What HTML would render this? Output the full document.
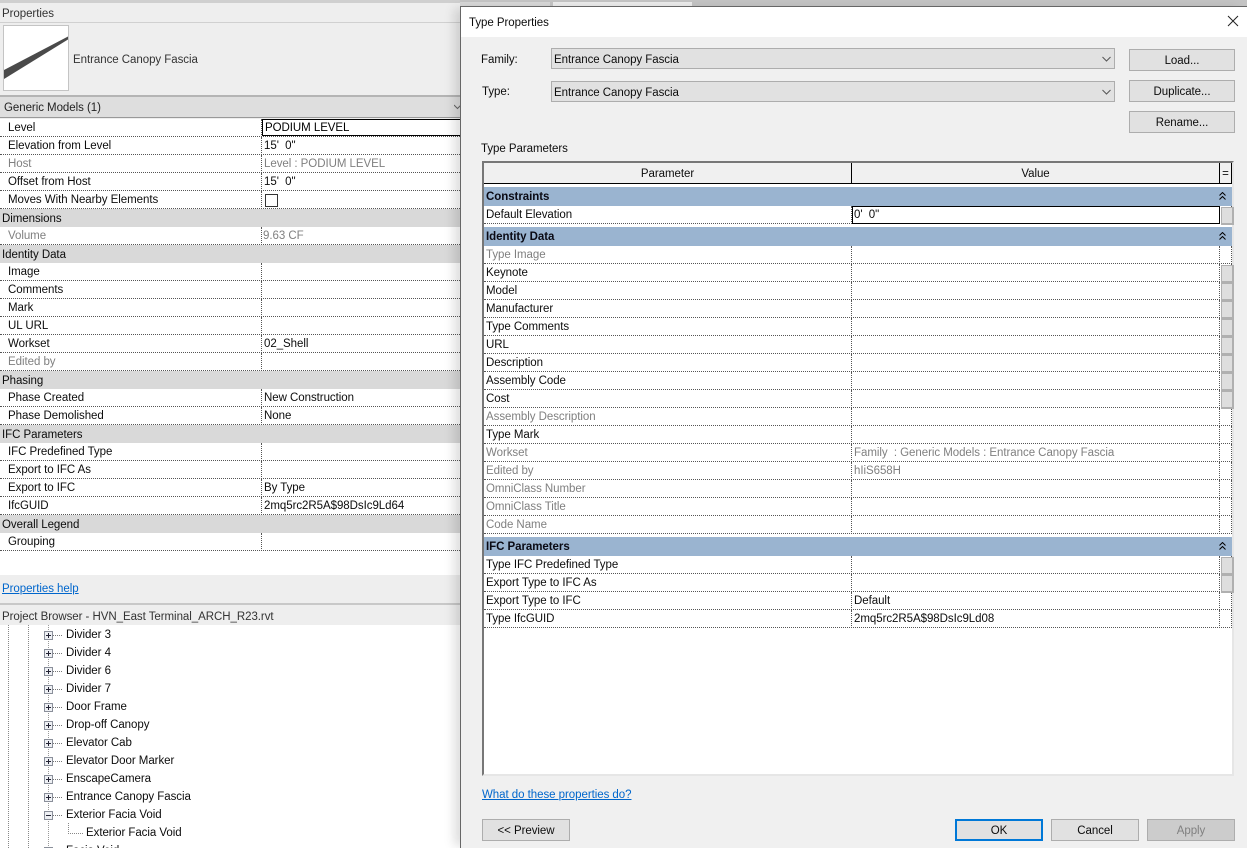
<!DOCTYPE html>
<html style="overflow:hidden"><head><meta charset="utf-8"><title>Type Properties</title>
<style>
html,body{margin:0;padding:0;width:1247px;height:848px;overflow:hidden}
body{font:11.5px/20px "Liberation Sans",sans-serif;letter-spacing:-.05px;color:#0c0c0c;background:#eee}
div,a,span{position:absolute;white-space:nowrap;box-sizing:border-box}
#w{left:0;top:0;width:1247px;height:848px;overflow:hidden;background:#eee}
.h{left:0;width:460px;height:18px;background:#d9d9d9;padding-left:2px}
.r{left:0;width:460px;height:18px;background:#fff;border-bottom:1px dotted #555;line-height:19px}
.r span{left:8px;top:0}.r span+span{left:264px}
.g{color:#808080}
.v{left:261px;top:0;width:0;height:18px;border-left:1px dotted #555}
.t{left:66px;line-height:20px}
.b{left:44px;width:9px;height:9px;border:1px solid #8a8f9a;background:linear-gradient(#223,#223) 1px 3px/5px 1px no-repeat,linear-gradient(#223,#223) 3px 1px/1px 5px no-repeat,#eef0f4}
.m{background:linear-gradient(#223,#223) 1px 3px/5px 1px no-repeat,#eef0f4}
.d{left:53px;width:9px;height:0;border-top:1px dotted #777}
.s{left:484px;width:748px;height:19px;background:#9ab4d0;font-weight:bold;padding-left:2px;line-height:21px;color:#0a0a14}
.s svg{position:absolute;left:735px;top:5px}
.p{left:484px;width:748px;height:18px;border-bottom:1px dotted #555;line-height:19px;background:#fff}
.p span{left:2px;top:0}.p span+span{left:370px}
.p:after{content:"";position:absolute;left:367px;top:0;height:18px;border-left:1px dotted #555}
.p:before{content:"";position:absolute;left:735px;top:0;height:18px;border-left:1px dotted #555;border-right:1px dotted #555;width:13px;box-sizing:border-box}
.x b{position:absolute;left:737px;top:1px;width:10px;height:15px;background:#dedede;border:1px solid #b0b0b0;border-width:1px 2px 2px 1px;z-index:2}
.btn{background:#e1e1e1;border:1px solid #adadad;text-align:center;line-height:22px;height:22px}
.cb{left:551px;width:564px;height:21px;background:#e1e1e1;border:1px solid #adadad;padding-left:2px;line-height:22px}
</style></head><body>
<div id="w">

<div style="left:0;top:0;width:1247px;height:3px;background:#cfcfcf"></div>
<div style="left:2px;top:4px;color:#333">Properties</div>
<div style="left:0;top:22px;width:460px;height:1px;background:#d0d0d0"></div>
<div style="left:3px;top:25px;width:66px;height:66px;background:#fff;border:1px solid #c4c4c4"></div>
<svg style="position:absolute;left:0;top:0" width="72" height="95"><polygon points="4,70 4,79 68,39.500 68,36.500" fill="#4a4a4a"/></svg>
<div style="left:73px;top:50px;color:#333">Entrance Canopy Fascia</div>
<div style="left:0;top:95px;width:460px;height:23px;background:#dedede;border-top:2px solid #b4b4b4;border-bottom:1px solid #999;padding-left:4px;line-height:22px;color:#222">Generic Models (1)</div>
<svg style="position:absolute;left:454px;top:104px" width="8" height="6"><path d="M0 1l3.500 3.500L7 1" fill="none" stroke="#666"/></svg>

<div class="r" style="top:119px"><span>Level</span><i class="v" style="position:absolute"></i></div>
<div class="r" style="top:137px"><span>Elevation from Level</span><span>15'&nbsp; 0"</span><i class="v" style="position:absolute"></i></div>
<div class="r g" style="top:155px"><span>Host</span><span>Level : PODIUM LEVEL</span><i class="v" style="position:absolute"></i></div>
<div class="r" style="top:173px"><span>Offset from Host</span><span>15'&nbsp; 0"</span><i class="v" style="position:absolute"></i></div>
<div class="r" style="top:191px"><span>Moves With Nearby Elements</span><i class="v" style="position:absolute"></i></div>
<div style="left:265px;top:194px;width:13px;height:13px;background:#fff;border:1px solid #333"></div>
<div style="left:262px;top:119px;width:200px;height:17px;background:#fff;border:1px solid #000;border-width:1px 0 1px 1px;line-height:17px;padding-left:2px;color:#000">PODIUM LEVEL</div>
<div class="h" style="top:209px">Dimensions</div>
<div class="r g" style="top:227px"><span>Volume</span><span style="left:263px">9.63 CF</span><i class="v" style="position:absolute"></i></div>
<div class="h" style="top:245px">Identity Data</div>
<div class="r" style="top:263px"><span>Image</span><i class="v" style="position:absolute"></i></div>
<div class="r" style="top:281px"><span>Comments</span><i class="v" style="position:absolute"></i></div>
<div class="r" style="top:299px"><span>Mark</span><i class="v" style="position:absolute"></i></div>
<div class="r" style="top:317px"><span>UL URL</span><i class="v" style="position:absolute"></i></div>
<div class="r" style="top:335px"><span>Workset</span><span>02_Shell</span><i class="v" style="position:absolute"></i></div>
<div class="r g" style="top:353px"><span>Edited by</span><i class="v" style="position:absolute"></i></div>
<div class="h" style="top:371px">Phasing</div>
<div class="r" style="top:389px"><span>Phase Created</span><span>New Construction</span><i class="v" style="position:absolute"></i></div>
<div class="r" style="top:407px"><span>Phase Demolished</span><span>None</span><i class="v" style="position:absolute"></i></div>
<div class="h" style="top:425px">IFC Parameters</div>
<div class="r" style="top:443px"><span>IFC Predefined Type</span><i class="v" style="position:absolute"></i></div>
<div class="r" style="top:461px"><span>Export to IFC As</span><i class="v" style="position:absolute"></i></div>
<div class="r" style="top:479px"><span>Export to IFC</span><span>By Type</span><i class="v" style="position:absolute"></i></div>
<div class="r" style="top:497px"><span>IfcGUID</span><span>2mq5rc2R5A$98DsIc9Ld64</span><i class="v" style="position:absolute"></i></div>
<div class="h" style="top:515px">Overall Legend</div>
<div class="r" style="top:533px"><span>Grouping</span><i class="v" style="position:absolute"></i></div>
<div style="left:0;top:551px;width:460px;height:24px;background:#fff"></div>
<a style="left:2px;top:579px;color:#0066cc;text-decoration:underline">Properties help</a>
<div style="left:0;top:603px;width:460px;height:2px;background:#c8c8c8"></div>
<div style="left:2px;top:607px;color:#333">Project Browser - HVN_East Terminal_ARCH_R23.rvt</div>

<div style="left:0;top:625px;width:460px;height:223px;background:#fff"></div>
<div style="left:8px;top:625px;height:223px;border-left:1px dotted #888"></div>
<div style="left:28px;top:625px;height:223px;border-left:1px dotted #888"></div>
<div style="left:48px;top:625px;height:223px;border-left:1px dotted #999"></div>
<div class="b" style="top:631px"></div><div class="d" style="top:635px"></div><div class="t" style="top:625px">Divider 3</div>
<div class="b" style="top:649px"></div><div class="d" style="top:653px"></div><div class="t" style="top:643px">Divider 4</div>
<div class="b" style="top:667px"></div><div class="d" style="top:671px"></div><div class="t" style="top:661px">Divider 6</div>
<div class="b" style="top:685px"></div><div class="d" style="top:689px"></div><div class="t" style="top:679px">Divider 7</div>
<div class="b" style="top:703px"></div><div class="d" style="top:707px"></div><div class="t" style="top:697px">Door Frame</div>
<div class="b" style="top:721px"></div><div class="d" style="top:725px"></div><div class="t" style="top:715px">Drop-off Canopy</div>
<div class="b" style="top:739px"></div><div class="d" style="top:743px"></div><div class="t" style="top:733px">Elevator Cab</div>
<div class="b" style="top:757px"></div><div class="d" style="top:761px"></div><div class="t" style="top:751px">Elevator Door Marker</div>
<div class="b" style="top:775px"></div><div class="d" style="top:779px"></div><div class="t" style="top:769px">EnscapeCamera</div>
<div class="b" style="top:793px"></div><div class="d" style="top:797px"></div><div class="t" style="top:787px">Entrance Canopy Fascia</div>
<div class="b m" style="top:811px"></div><div class="d" style="top:815px"></div><div class="t" style="top:805px">Exterior Facia Void</div>
<div style="left:68px;top:823px;width:15px;height:11px;border-left:1px dotted #888;border-bottom:1px dotted #888"></div>
<div class="t" style="left:86px;top:823px">Exterior Facia Void</div>
<div class="b" style="top:847px"></div><div class="t" style="top:841px">Facia Void</div>

<div style="left:460px;top:0;width:787px;height:7px;background:#c4c4c4"></div>
<div style="left:553px;top:2px;width:139px;height:5px;background:#ececec"></div>
<div style="left:460px;top:2px;width:90px;height:5px;background:#d8d8d8"></div>

<div style="left:460px;top:6px;width:787px;height:842px;background:#f0f0f0;border-top:1px solid #666;border-left:1px solid #666;box-shadow:-8px 0 10px -2px rgba(0,0,0,.13)"></div>
<div style="left:461px;top:7px;width:786px;height:30px;background:#fff"></div>
<div style="left:469px;top:13px">Type Properties</div>
<svg style="position:absolute;left:1227px;top:15px" width="12" height="12"><path d="M1 1l10 10M11 1L1 11" stroke="#222" fill="none"/></svg>

<div style="left:481px;top:50px">Family:</div>
<div style="left:482px;top:82px">Type:</div>
<div class="cb" style="top:48px">Entrance Canopy Fascia</div>
<div class="cb" style="top:81px">Entrance Canopy Fascia</div>
<svg style="position:absolute;left:1102px;top:56px" width="9" height="6"><path d="M.5 1L4.500 5l4-4" fill="none" stroke="#555"/></svg>
<svg style="position:absolute;left:1102px;top:89px" width="9" height="6"><path d="M.5 1L4.500 5l4-4" fill="none" stroke="#555"/></svg>
<div class="btn" style="left:1129px;top:49px;width:106px">Load...</div>
<div class="btn" style="left:1129px;top:80px;width:106px">Duplicate...</div>
<div class="btn" style="left:1129px;top:111px;width:106px">Rename...</div>
<div style="left:481px;top:139px">Type Parameters</div>

<div style="left:482px;top:161px;width:752px;height:615px;background:#fff;border:2px solid #e6e6e6;border-top-color:#777;border-left-color:#777"></div>
<div style="left:484px;top:163px;width:748px;height:21px;background:#f0f0f0;border-bottom:1px solid #000"></div>
<div style="left:851px;top:163px;width:1px;height:21px;background:#000"></div>
<div style="left:1219px;top:163px;width:1px;height:21px;background:#000"></div>
<div style="left:1231px;top:163px;width:1px;height:21px;background:#000"></div>
<div style="left:484px;top:164px;width:367px;text-align:center">Parameter</div>
<div style="left:852px;top:164px;width:367px;text-align:center">Value</div>
<div style="left:1220px;top:164px;width:11px;text-align:center">=</div>

<div class="s" style="top:187px">Constraints<svg width="7" height="9"><path d="M.5 3.500L3.500.5l3 3M.5 7.500l3-3 3 3" fill="none" stroke="#000"/></svg></div>
<div class="p x" style="top:206px"><span>Default Elevation</span><b></b></div>
<div style="left:852px;top:206px;width:368px;height:18px;background:#fff;border:1px solid #000;line-height:17px;padding-left:1px;z-index:3">0'&nbsp; 0"</div>
<div class="s" style="top:227px">Identity Data<svg width="7" height="9"><path d="M.5 3.500L3.500.5l3 3M.5 7.500l3-3 3 3" fill="none" stroke="#000"/></svg></div>
<div class="p g" style="top:246px"><span>Type Image</span></div>
<div class="p x" style="top:264px"><span>Keynote</span><b></b></div>
<div class="p x" style="top:282px"><span>Model</span><b></b></div>
<div class="p x" style="top:300px"><span>Manufacturer</span><b></b></div>
<div class="p x" style="top:318px"><span>Type Comments</span><b></b></div>
<div class="p x" style="top:336px"><span>URL</span><b></b></div>
<div class="p x" style="top:354px"><span>Description</span><b></b></div>
<div class="p x" style="top:372px"><span>Assembly Code</span><b></b></div>
<div class="p x" style="top:390px"><span>Cost</span><b></b></div>
<div class="p g" style="top:408px"><span>Assembly Description</span></div>
<div class="p" style="top:426px"><span>Type Mark</span></div>
<div class="p g" style="top:444px"><span>Workset</span><span>Family&nbsp; : Generic Models : Entrance Canopy Fascia</span></div>
<div class="p g" style="top:462px"><span>Edited by</span><span>hIiS658H</span></div>
<div class="p g" style="top:480px"><span>OmniClass Number</span></div>
<div class="p g" style="top:498px"><span>OmniClass Title</span></div>
<div class="p g" style="top:516px"><span>Code Name</span></div>
<div class="s" style="top:537px">IFC Parameters<svg width="7" height="9"><path d="M.5 3.500L3.500.5l3 3M.5 7.500l3-3 3 3" fill="none" stroke="#000"/></svg></div>
<div class="p x" style="top:556px"><span>Type IFC Predefined Type</span><b></b></div>
<div class="p x" style="top:574px"><span>Export Type to IFC As</span><b></b></div>
<div class="p" style="top:592px"><span>Export Type to IFC</span><span>Default</span></div>
<div class="p" style="top:610px"><span>Type IfcGUID</span><span>2mq5rc2R5A$98DsIc9Ld08</span></div>

<a style="left:482px;top:785px;color:#0066cc;text-decoration:underline">What do these properties do?</a>
<div class="btn" style="left:482px;top:819px;width:88px">&lt;&lt; Preview</div>
<div class="btn" style="left:955px;top:819px;width:88px;border:2px solid #0078d7;line-height:20px">OK</div>
<div class="btn" style="left:1051px;top:819px;width:88px">Cancel</div>
<div class="btn" style="left:1147px;top:819px;width:88px;background:#ccc;color:#808080">Apply</div>
</div>
</body></html>
